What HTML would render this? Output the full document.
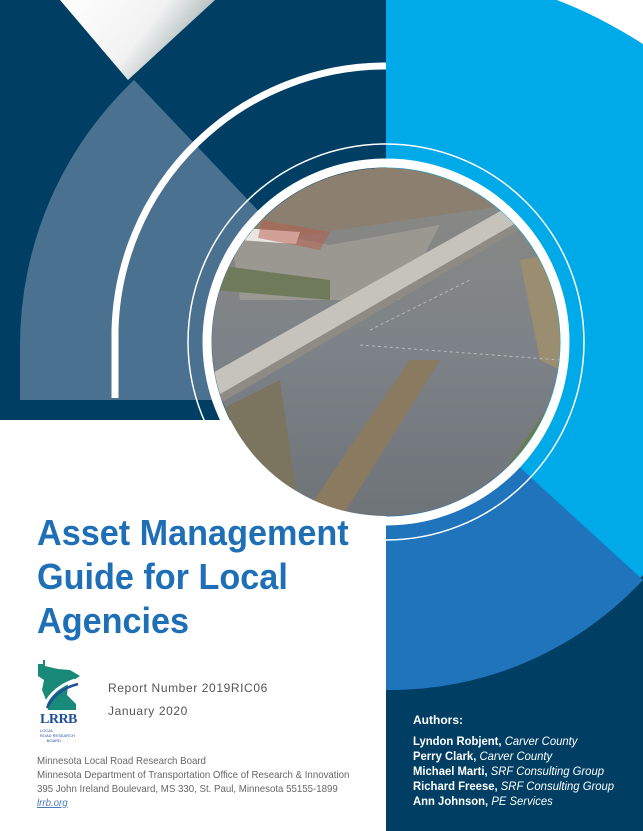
<!DOCTYPE html>
<html><head><meta charset="utf-8"><style>
*{margin:0;padding:0}
html,body{width:643px;height:831px;overflow:hidden}
body{position:relative;background:#fff;font-family:"Liberation Sans",sans-serif}
.t{position:absolute;white-space:nowrap}
svg{display:block}
</style></head><body>
<svg width="643" height="831" style="position:absolute;left:0;top:0">
<defs>
<clipPath id="ph"><circle cx="386" cy="342" r="174"/></clipPath>
<clipPath id="lh"><rect x="0" y="0" width="386" height="420"/></clipPath>
<clipPath id="rh"><rect x="386" y="0" width="257" height="831"/></clipPath>
<linearGradient id="wg" x1="0" y1="0" x2="1" y2="0.4"><stop offset="0" stop-color="#fff"/><stop offset="0.6" stop-color="#f2f2f2"/><stop offset="1" stop-color="#9aa"/></linearGradient>
<linearGradient id="pg" x1="0" y1="0" x2="0" y2="1"><stop offset="0" stop-color="#8c8a82"/><stop offset="0.5" stop-color="#7d8388"/><stop offset="1" stop-color="#6e7378"/></linearGradient>
</defs>
<g clip-path="url(#rh)">
<rect x="386" y="0" width="257" height="831" fill="#fff"/>
<rect x="386" y="470" width="257" height="361" fill="#003f63"/>
<circle cx="386" cy="440" r="472" fill="#00a9e8"/>
<path d="M643 575 A345 345 0 0 1 386 690 L386 831 L643 831Z" fill="#003f63"/>
<path d="M386 345 L643 580 A345 345 0 0 1 386 690 Z" fill="#1f74bc"/>
</g>
<g clip-path="url(#lh)">
<rect x="0" y="0" width="386" height="420" fill="#003f63"/>
<path d="M386 345 L134 80 A366 366 0 0 0 20 345 L20 400 L386 400 Z" fill="#4a7290"/>
<path d="M60 0 L215 0 L128 80 Z" fill="url(#wg)"/>
<path d="M115 398 L115 330 A271 271 0 0 1 386 66" fill="none" stroke="#fff" stroke-width="7"/>
</g>
<g clip-path="url(#ph)">
<rect x="200" y="160" width="380" height="360" fill="url(#pg)"/>
<path d="M200 160 L580 160 L580 195 L200 250Z" fill="#8b8070"/>
<path d="M230 225 L330 245 L440 225 L400 300 L240 300Z" fill="#9a9890"/>
<path d="M215 265 L330 280 L330 300 L215 290Z" fill="#6f7a5a"/>
<path d="M200 380 L520 200 L530 215 L210 400Z" fill="#c5c3bc"/>
<path d="M210 400 L530 215 L532 222 L212 408Z" fill="#8e8b85"/>
<path d="M300 520 L410 360 L440 360 L340 520Z" fill="#8a7a5f"/>
<path d="M470 520 L560 390 L580 400 L580 520Z" fill="#6d7c4f"/>
<path d="M520 260 L580 250 L580 380 L540 360Z" fill="#9a8d70"/>
<path d="M240 228 L300 232 L296 244 L238 240Z" fill="#e8e6e2"/>
<path d="M262 220 L330 232 L320 250 L258 238Z" fill="#b95a4a" opacity=".5"/>
<path d="M200 420 L280 380 L300 520 L200 520Z" fill="#7b7560"/>
<path d="M360 345 L560 360 M370 330 L470 280" stroke="#b8b8b8" stroke-width="1" stroke-dasharray="3 3"/>
</g>
<circle cx="386" cy="342" r="179" fill="none" stroke="#fff" stroke-width="9"/>
<circle cx="386" cy="342" r="198" fill="none" stroke="#fff" stroke-width="1.5"/>
<path d="M38 664 L43 664 L43 660 L45 660 L45 666 L58 669 L70 670 L80 676 L68 684 L67 695 L76 704 L76 710 L48 710 L46 700 L42 690 L44 680 L38 676Z" fill="#1a8a78"/>
<path d="M45 705 Q52 688 75 680" fill="none" stroke="#fff" stroke-width="3"/>
<path d="M47 708 Q55 690 78 684" fill="none" stroke="#1f4e9c" stroke-width="2.5"/>
</svg>
<div class="t" style="left:40px;top:712px;font:bold 14px 'Liberation Serif',serif;color:#1f4e9c;letter-spacing:-0.5px">LRRB</div>
<div class="t" style="left:40px;top:728px;font:4px 'Liberation Sans',sans-serif;color:#1f4e9c;line-height:5px">LOCAL<br>ROAD RESEARCH<br>&nbsp;&nbsp;&nbsp;&nbsp;&nbsp;&nbsp;BOARD</div>
<div class="t" style="left:37px;top:511px;font:bold 36px/44px 'Liberation Sans',sans-serif;color:#1f6fb6;transform:scaleX(0.95);transform-origin:0 0">Asset Management<br>Guide for Local<br>Agencies</div>
<div class="t" style="left:108px;top:681px;font:12px 'Liberation Sans',sans-serif;color:#555;letter-spacing:0.6px">Report Number 2019RIC06</div>
<div class="t" style="left:108px;top:704px;font:12px 'Liberation Sans',sans-serif;color:#555;letter-spacing:0.6px">January 2020</div>
<div class="t" style="left:37px;top:755px;font:10.3px/14px 'Liberation Sans',sans-serif;color:#666;transform:scaleX(0.94);transform-origin:0 0">Minnesota Local Road Research Board<br>Minnesota Department of Transportation Office of Research &amp; Innovation<br>395 John Ireland Boulevard, MS 330, St. Paul, Minnesota 55155-1899<br><span style="color:#4a7ab8;text-decoration:underline;font-style:italic">lrrb.org</span></div>
<div class="t" style="left:413px;top:713px;font:bold 12px/15px 'Liberation Sans',sans-serif;color:#fff">Authors:</div>
<div class="t" style="left:413px;top:734px;font:bold 12px/15px 'Liberation Sans',sans-serif;color:#fff;transform:scaleX(0.94);transform-origin:0 0">Lyndon Robjent, <i style="font-weight:normal">Carver County</i><br>Perry Clark, <i style="font-weight:normal">Carver County</i><br>Michael Marti, <i style="font-weight:normal">SRF Consulting Group</i><br>Richard Freese, <i style="font-weight:normal">SRF Consulting Group</i><br>Ann Johnson, <i style="font-weight:normal">PE Services</i></div>
</body></html>
